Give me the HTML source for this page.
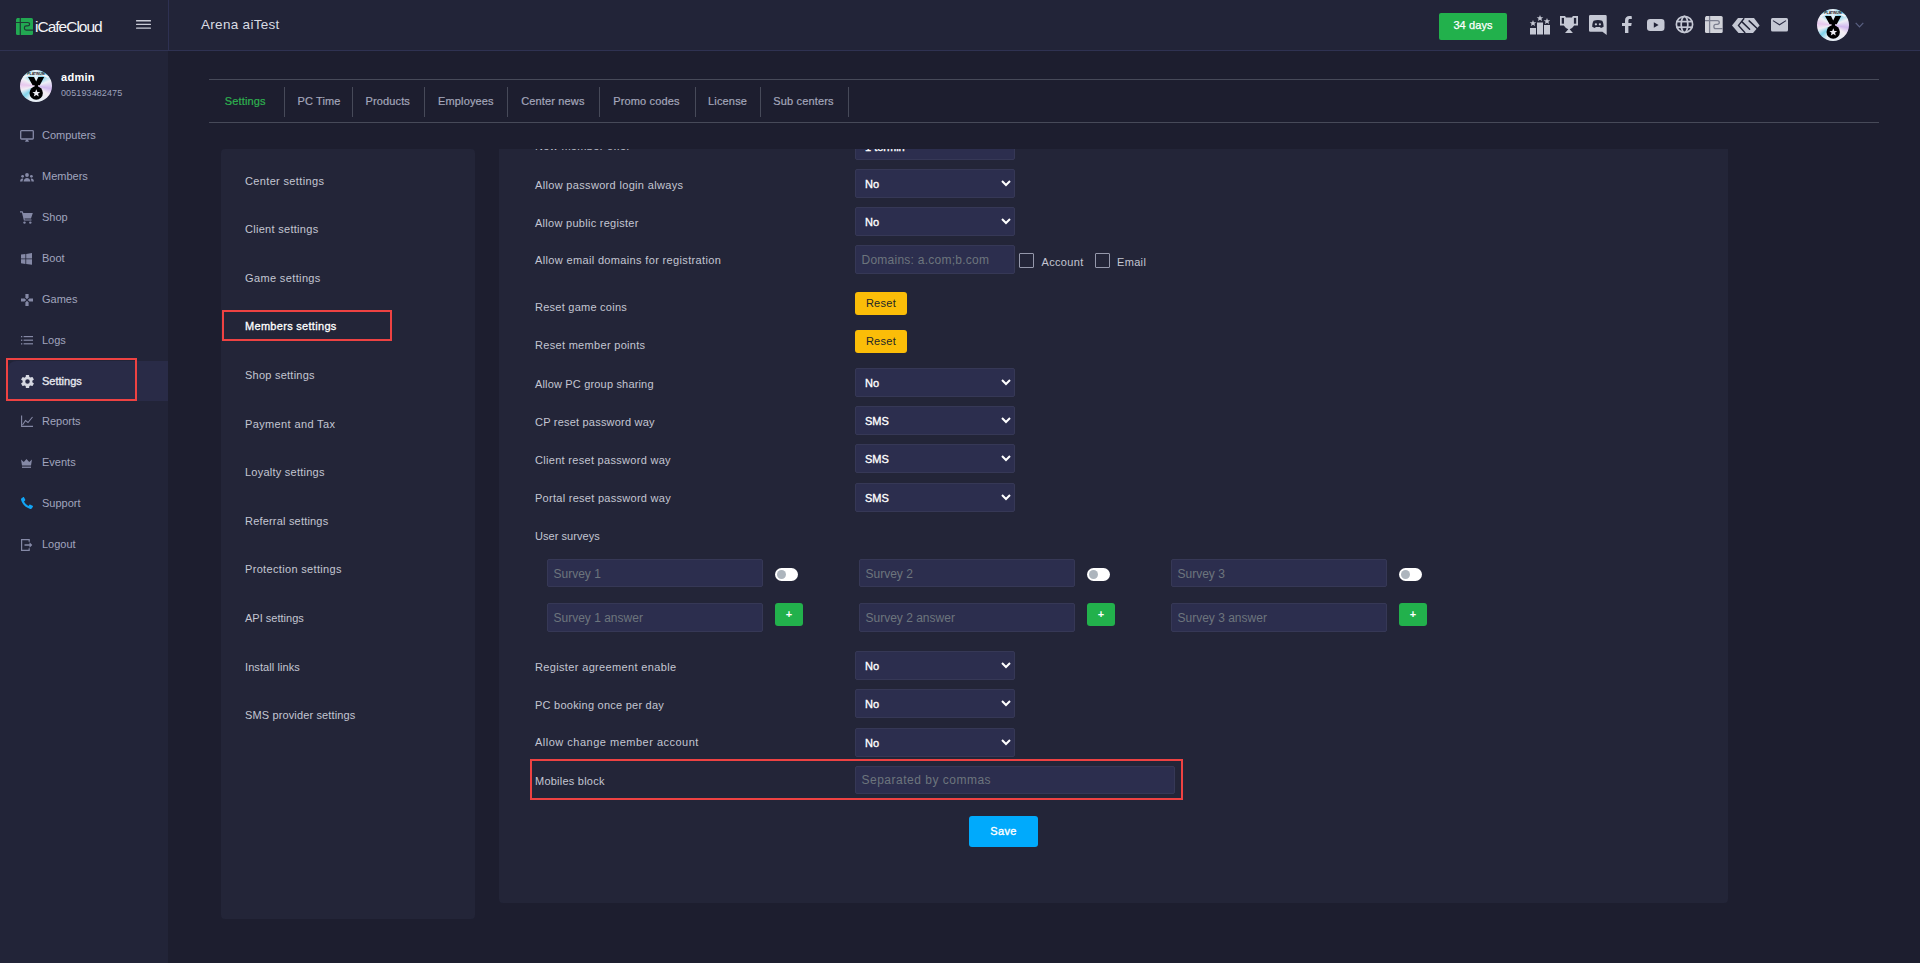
<!DOCTYPE html>
<html><head><meta charset="utf-8">
<style>
*{box-sizing:border-box;margin:0;padding:0}
html,body{width:1920px;height:963px;overflow:hidden;background:#1d1e2f;font-family:"Liberation Sans",sans-serif;color:#a9adc2}
.abs{position:absolute}
#hdr{position:absolute;left:0;top:0;width:1920px;height:51px;background:#222438;border-bottom:1px solid #2f3252}
#hdr .vline{position:absolute;left:168px;top:0;width:1px;height:50px;background:#2e3152}
#side{position:absolute;left:0;top:51px;width:168px;height:912px;background:#222438}
.mi{position:absolute;left:0;width:168px;height:41px;font-size:11px;color:#a3a8c0}
.mi .t{position:absolute;left:42px;top:0;line-height:41px;white-space:nowrap}
.mi svg{position:absolute;left:20px;top:14px}
.tabs{position:absolute;left:209px;top:79px;width:1670px;height:44px;border-top:1px solid #4a4c60;border-bottom:1px solid #4a4c60}
.tab{position:absolute;top:0;height:42px;line-height:42px;font-size:11px;color:#a6a9bd;white-space:nowrap}
.tsep{position:absolute;top:8px;width:1px;height:30px;background:#4a4c60}
.card{position:absolute;background:#232539;border-radius:5px}
.sm{position:absolute;left:24px;font-size:11px;color:#c5c7d3;white-space:nowrap}
.lbl{position:absolute;left:535px;font-size:11px;color:#c5c7d3;white-space:nowrap}
.red{position:absolute;border:2px solid #ee4242}
.av{width:32px;height:32px;border-radius:50%;overflow:hidden;position:absolute;background:conic-gradient(from 0deg,#eef2f8,#78d0ea 35deg,#eef0f6 70deg,#d0b8ee 100deg,#f5eef5 125deg,#e6ecf4 160deg,#e8f0f6 205deg,#7fd3ea 230deg,#f3eef5 255deg,#e8c8ee 275deg,#f0f2f6 300deg,#8fd8ee 325deg,#eef2f8)}
.mt{font-size:11px;color:#a1a5be;line-height:18px;white-space:nowrap}
.tt{font-size:11px;line-height:18px;letter-spacing:0.15px;white-space:nowrap;-webkit-text-stroke:0.2px currentColor}
.st{font-size:11px;line-height:18px;letter-spacing:0.35px;color:#c4c6d2;white-space:nowrap}
.lb{font-size:11px;line-height:18px;letter-spacing:0.33px;color:#c4c6d2;white-space:nowrap}
.sel{position:absolute;width:160px;height:29px;background:#2c2e4e;border-radius:2px;border:1px solid #363856;font-size:11px;color:#fff;font-weight:bold}
.sel .v{position:absolute;left:9px;top:1px;line-height:27px;letter-spacing:0px;font-weight:normal;-webkit-text-stroke:0.35px #fff;font-size:11px}
.inp{position:absolute;background:#2c2e4e;border-radius:2px;border:1px solid #363856;font-size:12px;color:#6c757d}
.inp .v{position:absolute;left:5.5px;top:1px;line-height:27px;white-space:nowrap;letter-spacing:0.25px;font-size:12px}
.cb{width:15px;height:15px;border:1px solid #9598ab;border-radius:1px}
.rst{width:52px;height:23px;background:#fbbd08;border-radius:3px;color:#212529;font-size:11px;text-align:center;line-height:23px;letter-spacing:0.3px}
.tog{width:23px;height:13px;border-radius:7px;background:#fff}
.tog .knob{position:absolute;left:2px;top:2px;width:9px;height:9px;border-radius:50%;background:#adb5bd}
.plus{width:28px;height:23.5px;background:#22b14c;border-radius:3px;color:#fff;font-size:11px;font-weight:bold;text-align:center;line-height:22px}
.save{width:69px;height:31px;background:#00aafc;border-radius:3px;color:#fff;font-size:11px;text-align:center;line-height:30px;letter-spacing:0.4px;-webkit-text-stroke:0.35px #fff}
</style></head>
<body>
<div id="hdr">
  <svg class="abs" style="left:16px;top:18px" width="17" height="17" viewBox="0 0 17 17">
    <path d="M1.2 0H15.5A1.5 1.5 0 0 1 17 1.5V15.5A1.5 1.5 0 0 1 15.5 17H1.5A1.5 1.5 0 0 1 0 15.5V1.2Z" fill="#22a852"/>
    <line x1="4.3" y1="0" x2="4.3" y2="17" stroke="#1f3a34" stroke-width="1.2"/>
    <path d="M0 4.5H11.6Q13.6 4.5 13.6 6.2Q13.6 7.9 11.6 7.9H10.2Q8.4 7.9 8.4 9.7V10.3Q8.4 12.1 10.2 12.1H17" fill="none" stroke="#1f3a34" stroke-width="1.2"/>
  </svg>
  <div class="abs" style="left:35px;top:16.5px;font-size:15.5px;letter-spacing:-1px;color:#f4f4f6;line-height:20px">iCafeCloud</div>
  <svg class="abs" style="left:136px;top:19.6px" width="15" height="9" viewBox="0 0 15 9">
    <rect x="0" y="0" width="15" height="1.4" rx="0.5" fill="#c9cbd6"/>
    <rect x="0" y="3.7" width="15" height="1.4" rx="0.5" fill="#c9cbd6"/>
    <rect x="0" y="7.4" width="15" height="1.4" rx="0.5" fill="#c9cbd6"/>
  </svg>
  <div class="vline"></div>
  <div class="abs" style="left:201px;top:15.5px;font-size:13.5px;letter-spacing:0.3px;color:#d9dbe3;line-height:18px">Arena aiTest</div>
  <div class="abs" style="left:1439px;top:13px;width:68px;height:27px;background:#22b14c;border-radius:2px;color:#fff;font-size:11px;text-align:center;line-height:25px;letter-spacing:0.1px;-webkit-text-stroke:0.25px #fff">34 days</div>
  <!-- rankings -->
  <svg class="abs" style="left:1529px;top:15px" width="21" height="20" viewBox="0 0 21 20" fill="#c5c8d4">
    <rect x="1" y="13" width="6" height="6.5"/>
    <rect x="8" y="7.5" width="6" height="12"/>
    <rect x="15" y="10" width="6" height="9.5"/>
    <polygon points="4,5 4.9,7.3 7.3,7.3 5.4,8.8 6.1,11.1 4,9.7 1.9,11.1 2.6,8.8 0.7,7.3 3.1,7.3"/>
    <polygon points="11,0 11.9,2.3 14.3,2.3 12.4,3.8 13.1,6.1 11,4.7 8.9,6.1 9.6,3.8 7.7,2.3 10.1,2.3"/>
    <polygon points="18,3 18.9,5.3 21.3,5.3 19.4,6.8 20.1,9.1 18,7.7 15.9,9.1 16.6,6.8 14.7,5.3 17.1,5.3"/>
  </svg>
  <!-- trophy -->
  <svg class="abs" style="left:1560px;top:16px" width="18" height="17" viewBox="0 0 18 17">
    <path d="M0 0H5L6 1.6H11.9L12.9 0H18V9.6H14.2Q12.6 12.3 9.7 13.2L12.9 17H5L8.3 13.2Q5.4 12.3 3.8 9.6H0Z" fill="#c5c8d4"/>
    <rect x="1.7" y="1.9" width="2.3" height="5.8" fill="#222438"/>
    <rect x="13.9" y="1.9" width="2.3" height="5.8" fill="#222438"/>
  </svg>
  <!-- discord -->
  <svg class="abs" style="left:1589px;top:15px" width="18" height="20" viewBox="0 0 18 20">
    <path d="M1.3 0H16.4A1.3 1.3 0 0 1 17.7 1.3V20L13.4 16.8H1.3A1.3 1.3 0 0 1 0 15.5V1.3A1.3 1.3 0 0 1 1.3 0Z" fill="#c5c8d4"/>
    <path d="M4.6 5.8C6 5.1 7.4 4.9 8.9 4.9S11.8 5.1 13.2 5.8C14.2 7.4 14.6 9.6 14.6 11.8C13.6 12.5 12.6 12.8 11.8 12.9L11.1 12H6.7L6 12.9C5.2 12.8 4.2 12.5 3.2 11.8C3.2 9.6 3.6 7.4 4.6 5.8Z" fill="#222438"/>
    <circle cx="6.9" cy="9.3" r="1.15" fill="#c5c8d4"/><circle cx="10.9" cy="9.3" r="1.15" fill="#c5c8d4"/>
  </svg>
  <!-- facebook -->
  <svg class="abs" style="left:1622px;top:16px" width="10" height="17" viewBox="0 0 10 17" fill="#c5c8d4">
    <path d="M3 17V10H0V7H3V4.5C3 1.5 4.8 0 7.3 0C8.5 0 9.5 0.1 9.8 0.2V3H8C6.7 3 6.4 3.6 6.4 4.6V7H9.7L9.2 10H6.4V17Z"/>
  </svg>
  <!-- youtube -->
  <svg class="abs" style="left:1647px;top:18.5px" width="17.5" height="12" viewBox="0 0 17.5 12">
    <rect x="0" y="0" width="17.5" height="12" rx="3.2" fill="#c5c8d4"/>
    <polygon points="6.8,3.3 11.6,6 6.8,8.7" fill="#222438"/>
  </svg>
  <!-- globe -->
  <svg class="abs" style="left:1675px;top:15px" width="19" height="19" viewBox="0 0 19 19" fill="none" stroke="#c5c8d4" stroke-width="1.7">
    <circle cx="9.5" cy="9.4" r="8.1"/>
    <ellipse cx="9.5" cy="9.4" rx="3.3" ry="8.1"/>
    <line x1="1.5" y1="6.6" x2="17.5" y2="6.6"/>
    <line x1="1.5" y1="12.2" x2="17.5" y2="12.2"/>
  </svg>
  <!-- i2 -->
  <svg class="abs" style="left:1705px;top:16px" width="18" height="17" viewBox="0 0 18 17">
    <path d="M1.2 0H16.2A1.5 1.5 0 0 1 17.7 1.5V15.5A1.5 1.5 0 0 1 16.2 17H1.5A1.5 1.5 0 0 1 0 15.5V1.2Z" fill="#d2d3da"/>
    <line x1="4.6" y1="0" x2="4.6" y2="17" stroke="#7b7e8f" stroke-width="1.3"/>
    <path d="M0 4.7H12.2Q14.3 4.7 14.3 6.5Q14.3 8.3 12.2 8.3H10.8Q8.9 8.3 8.9 10.2V10.8Q8.9 12.7 10.8 12.7H17.7" fill="none" stroke="#7b7e8f" stroke-width="1.3"/>
  </svg>
  <!-- ggleap chevrons -->
  <svg class="abs" style="left:1732px;top:18px" width="28" height="15" viewBox="0 0 28 15">
    <polygon points="6,0 22,0 27.6,7.4 21,15 6.5,15 0,7.4" fill="#c5c8d4"/>
    <polyline points="12.2,0.2 6.5,7.4 13.2,15" fill="none" stroke="#222438" stroke-width="1.4"/>
    <line x1="10" y1="3.9" x2="17.6" y2="11.3" stroke="#222438" stroke-width="1.5" stroke-linecap="round"/>
    <line x1="17.1" y1="2.9" x2="26" y2="11.2" stroke="#222438" stroke-width="1.5" stroke-linecap="round"/>
  </svg>
  <!-- mail -->
  <svg class="abs" style="left:1771px;top:17.7px" width="17" height="14" viewBox="0 0 17 14">
    <rect x="0" y="0" width="17" height="13.5" rx="1.5" fill="#c5c8d4"/>
    <polyline points="2,2.6 8.5,6.8 15,2.6" fill="none" stroke="#2a2c44" stroke-width="1.1"/>
  </svg>
  <!-- avatar -->
  <div class="abs av" style="left:1817px;top:9px"><svg width="32" height="32" viewBox="0 0 32 32" style="position:absolute;left:0;top:0"><path d="M3 6.5Q16 -1 29 6.5L28 8Q16 1.5 4 8Z" fill="#f4f4f6"/><text x="16" y="4.9" font-size="3.6" text-anchor="middle" font-family="Liberation Sans" font-weight="bold" fill="#1a1a1a" letter-spacing="-0.1">PLATINUM</text><polygon points="8,7 14,7 16.2,11.6 18.4,7 24.2,7 19.8,15.3 12.6,15.3" fill="#000"/><rect x="14.6" y="14.8" width="3.4" height="3" fill="#000"/><circle cx="16.2" cy="23" r="6.7" fill="#000"/><polygon points="16.3,19.2 17.4,21.9 20.2,22 18,23.8 18.8,26.6 16.3,25 13.8,26.6 14.6,23.8 12.4,22 15.2,21.9" fill="#ececf2"/></svg></div>
  <svg class="abs" style="left:1855px;top:22px" width="9" height="6" viewBox="0 0 9 6"><polyline points="0.7,0.8 4.5,4.8 8.3,0.8" fill="none" stroke="#5a6082" stroke-width="1.2"/></svg>
</div>
<div id="side"></div>
<div class="abs" style="left:8px;top:361px;width:160px;height:40px;background:#292b47;border-top-left-radius:8px"></div>
<div class="abs av" style="left:20px;top:70px"><svg width="32" height="32" viewBox="0 0 32 32" style="position:absolute;left:0;top:0"><path d="M3 6.5Q16 -1 29 6.5L28 8Q16 1.5 4 8Z" fill="#f4f4f6"/><text x="16" y="4.9" font-size="3.6" text-anchor="middle" font-family="Liberation Sans" font-weight="bold" fill="#1a1a1a" letter-spacing="-0.1">PLATINUM</text><polygon points="8,7 14,7 16.2,11.6 18.4,7 24.2,7 19.8,15.3 12.6,15.3" fill="#000"/><rect x="14.6" y="14.8" width="3.4" height="3" fill="#000"/><circle cx="16.2" cy="23" r="6.7" fill="#000"/><polygon points="16.3,19.2 17.4,21.9 20.2,22 18,23.8 18.8,26.6 16.3,25 13.8,26.6 14.6,23.8 12.4,22 15.2,21.9" fill="#ececf2"/></svg></div>
<div class="abs" style="left:61px;top:70px;font-size:11px;font-weight:bold;color:#fff;line-height:14px;letter-spacing:0.3px">admin</div>
<div class="abs" style="left:61px;top:87px;font-size:9px;color:#9da1bb;line-height:12px;letter-spacing:0.1px">005193482475</div>
<div class="abs mt" style="left:42px;top:126px">Computers</div>
<svg class="abs" style="left:20px;top:130px" width="14" height="12" viewBox="0 0 14 12"><rect x="0.7" y="0.7" width="12.6" height="8.3" rx="0.8" fill="none" stroke="#8589a6" stroke-width="1.3"/><polygon points="5,11.8 9,11.8 7.8,9.6 6.2,9.6" fill="#8589a6"/></svg>
<div class="abs mt" style="left:42px;top:167px">Members</div>
<svg class="abs" style="left:20px;top:173px" width="14" height="9" viewBox="0 0 14 9" fill="#8589a6"><circle cx="7" cy="2" r="1.9"/><circle cx="2.6" cy="3.3" r="1.4"/><circle cx="11.4" cy="3.3" r="1.4"/><path d="M3.6 8.6C3.8 6.2 5.2 4.9 7 4.9S10.2 6.2 10.4 8.6Z"/><path d="M0 8.6C0.2 6.9 1.1 5.6 2.3 5.6C2.7 5.6 3 5.7 3.3 5.9C2.8 6.6 2.6 7.6 2.5 8.6Z"/><path d="M14 8.6C13.8 6.9 12.9 5.6 11.7 5.6C11.3 5.6 11 5.7 10.7 5.9C11.2 6.6 11.4 7.6 11.5 8.6Z"/></svg>
<div class="abs mt" style="left:42px;top:208px">Shop</div>
<svg class="abs" style="left:20px;top:211px" width="13" height="13" viewBox="0 0 13 13" fill="#8589a6"><path d="M0 0.2H2.6L3.4 2H12.8L11 7.5H4.5L4.8 8.5H11.5V9.6H3.9L1.9 1.4H0Z"/><circle cx="4.5" cy="11.6" r="1.2"/><circle cx="10.3" cy="11.6" r="1.2"/></svg>
<div class="abs mt" style="left:42px;top:249px">Boot</div>
<svg class="abs" style="left:21px;top:253px" width="11" height="12" viewBox="0 0 11 12" fill="#8589a6"><path d="M0 1.6L4.4 1V5.5H0Z"/><path d="M5.2 0.9L11 0V5.5H5.2Z"/><path d="M0 6.3H4.4V10.9L0 10.3Z"/><path d="M5.2 6.3H11V11.8L5.2 11Z"/></svg>
<div class="abs mt" style="left:42px;top:290px">Games</div>
<svg class="abs" style="left:21px;top:294px" width="12" height="12" viewBox="0 0 12 12" fill="#8589a6"><path d="M4.4 0H7.6V3.6L6 5.2L4.4 3.6Z"/><path d="M4.4 12H7.6V8.4L6 6.8L4.4 8.4Z"/><path d="M0 4.4V7.6H3.6L5.2 6L3.6 4.4Z"/><path d="M12 4.4V7.6H8.4L6.8 6L8.4 4.4Z"/></svg>
<div class="abs mt" style="left:42px;top:331px">Logs</div>
<svg class="abs" style="left:21px;top:336px" width="12" height="9" viewBox="0 0 12 9" fill="#8589a6"><rect x="0" y="0" width="1.3" height="1.3"/><rect x="2.6" y="0" width="9.4" height="1.2"/><rect x="0" y="3.6" width="1.3" height="1.3"/><rect x="2.6" y="3.6" width="9.4" height="1.2"/><rect x="0" y="7.2" width="1.3" height="1.3"/><rect x="2.6" y="7.2" width="9.4" height="1.2"/></svg>
<div class="abs mt" style="left:42px;top:412px">Reports</div>
<svg class="abs" style="left:21px;top:415px" width="12" height="12" viewBox="0 0 12 12" fill="none" stroke="#8589a6" stroke-width="1.1"><polyline points="0.6,0.5 0.6,11.4 12,11.4"/><polyline points="1.5,10 4.5,5.5 7,7.5 11.5,2"/></svg>
<div class="abs mt" style="left:42px;top:453px">Events</div>
<svg class="abs" style="left:21px;top:459px" width="11" height="9" viewBox="0 0 11 9" fill="#8589a6"><path d="M0 0.5L2.8 3L5.5 0L8.2 3L11 0.5L10 6.5H1Z"/><rect x="1" y="7.6" width="9" height="1.3"/></svg>
<div class="abs mt" style="left:42px;top:494px">Support</div>
<svg class="abs" style="left:21px;top:497px" width="12" height="12" viewBox="0 0 12 12" fill="#12a4f4"><path d="M0.3 1.6L2 0.2C2.4 -0.1 2.9 0 3.1 0.4L4.2 2.6C4.4 3 4.3 3.4 4 3.7L3 4.5C3.8 6.2 5.6 8.1 7.4 8.9L8.3 7.9C8.6 7.6 9 7.5 9.4 7.7L11.6 8.8C12 9 12.1 9.5 11.8 9.9L10.4 11.7C10.1 12 9.7 12.1 9.3 12C4.9 10.9 1.1 7.1 0 2.6C-0.1 2.2 0 1.9 0.3 1.6Z"/></svg>
<div class="abs mt" style="left:42px;top:535px">Logout</div>
<svg class="abs" style="left:21px;top:539px" width="12" height="12" viewBox="0 0 12 12" fill="none" stroke="#8589a6" stroke-width="1.2"><polyline points="8.2,2.8 8.2,0.6 0.6,0.6 0.6,11.4 8.2,11.4 8.2,9.2"/><path d="M3.5 5.2H8.5V3.3L11.3 6L8.5 8.7V6.8H3.5Z" fill="#8589a6" stroke="none"/></svg>
<div class="abs mt" style="left:42px;top:372px;color:#e6e7ee;font-size:11px;letter-spacing:0px;-webkit-text-stroke:0.35px #e6e7ee">Settings</div>
<svg class="abs" style="left:20.5px;top:374.5px" width="13" height="13" viewBox="2 2 20 20" fill="#d6d8e2"><path d="M19.4 13c.04-.33.06-.66.06-1s-.02-.67-.06-1l2.1-1.65c.2-.15.25-.42.13-.64l-2-3.46c-.12-.22-.39-.3-.61-.22l-2.49 1c-.52-.4-1.08-.73-1.69-.98l-.38-2.65A.49.49 0 0 0 14 2h-4c-.25 0-.46.18-.49.42l-.38 2.65c-.61.25-1.17.59-1.69.98l-2.49-1a.5.5 0 0 0-.61.22l-2 3.46c-.13.22-.07.49.12.64L4.57 11c-.04.33-.07.67-.07 1s.03.67.07 1l-2.11 1.65c-.19.15-.24.42-.12.64l2 3.46c.12.22.39.3.61.22l2.49-1c.52.4 1.08.73 1.69.98l.38 2.65c.03.24.24.42.49.42h4c.25 0 .46-.18.49-.42l.38-2.65c.61-.25 1.17-.59 1.69-.98l2.49 1c.23.09.49 0 .61-.22l2-3.46c.12-.22.07-.49-.12-.64L19.4 13zM12 15.5A3.5 3.5 0 1 1 12 8.5a3.5 3.5 0 0 1 0 7z"/></svg>
<div class="red" style="left:6px;top:358px;width:131px;height:43px"></div>
<div class="abs" style="left:209px;top:79px;width:1670px;height:1px;background:#474a59"></div>
<div class="abs" style="left:209px;top:122px;width:1670px;height:1px;background:#474a59"></div>
<div class="abs tt" style="left:224.8px;top:91.5px;color:#2eb24f">Settings</div>
<div class="abs tt" style="left:297.4px;top:91.5px;color:#a4a7bb">PC Time</div>
<div class="abs tt" style="left:365.4px;top:91.5px;color:#a4a7bb">Products</div>
<div class="abs tt" style="left:438.0px;top:91.5px;color:#a4a7bb">Employees</div>
<div class="abs tt" style="left:521.2px;top:91.5px;color:#a4a7bb">Center news</div>
<div class="abs tt" style="left:613.2px;top:91.5px;color:#a4a7bb">Promo codes</div>
<div class="abs tt" style="left:708.1px;top:91.5px;color:#a4a7bb">License</div>
<div class="abs tt" style="left:773.3px;top:91.5px;color:#a4a7bb">Sub centers</div>
<div class="abs" style="left:284px;top:87px;width:1px;height:30px;background:#474a59"></div>
<div class="abs" style="left:352px;top:87px;width:1px;height:30px;background:#474a59"></div>
<div class="abs" style="left:424px;top:87px;width:1px;height:30px;background:#474a59"></div>
<div class="abs" style="left:507px;top:87px;width:1px;height:30px;background:#474a59"></div>
<div class="abs" style="left:599px;top:87px;width:1px;height:30px;background:#474a59"></div>
<div class="abs" style="left:695px;top:87px;width:1px;height:30px;background:#474a59"></div>
<div class="abs" style="left:760px;top:87px;width:1px;height:30px;background:#474a59"></div>
<div class="abs" style="left:848px;top:87px;width:1px;height:30px;background:#474a59"></div>
<div class="abs" style="left:221px;top:149px;width:254px;height:770px;background:#232538;border-radius:4px"></div>
<div class="abs" style="left:499px;top:149px;width:1229px;height:754px;background:#232538;border-radius:0 0 4px 4px"></div>
<div class="abs st" style="left:245px;top:171.6px;letter-spacing:0.35px">Center settings</div>
<div class="abs st" style="left:245px;top:220.2px;letter-spacing:0.29px">Client settings</div>
<div class="abs st" style="left:245px;top:268.8px;letter-spacing:0.37px">Game settings</div>
<div class="abs st" style="left:245px;top:317.4px;color:#fff;letter-spacing:0.3px;-webkit-text-stroke:0.3px #fff">Members settings</div>
<div class="abs st" style="left:245px;top:366.0px;letter-spacing:0.24px">Shop settings</div>
<div class="abs st" style="left:245px;top:414.6px;letter-spacing:0.37px">Payment and Tax</div>
<div class="abs st" style="left:245px;top:463.2px;letter-spacing:0.24px">Loyalty settings</div>
<div class="abs st" style="left:245px;top:511.8px;letter-spacing:0.19px">Referral settings</div>
<div class="abs st" style="left:245px;top:560.4px;letter-spacing:0.33px">Protection settings</div>
<div class="abs st" style="left:245px;top:609.0px;letter-spacing:0.01px">API settings</div>
<div class="abs st" style="left:245px;top:657.6px;letter-spacing:0.08px">Install links</div>
<div class="abs st" style="left:245px;top:706.2px;letter-spacing:0.13px">SMS provider settings</div>
<div class="red" style="left:222px;top:310px;width:170px;height:31px"></div>
<div class="abs" style="left:499px;top:149px;width:1229px;height:753px;overflow:hidden">
<div class="abs lb" style="left:36px;top:-12.0px;">New member offer</div>
<div class="abs sel" style="left:356px;top:-18.5px"><span class="v" style="top:2px">1 termin</span></div>
<div class="abs lb" style="left:36px;top:26.6px;letter-spacing:0.33px">Allow password login always</div>
<div class="abs sel" style="left:356px;top:20px"><span class="v">No</span><svg width="10" height="7" viewBox="0 0 10 7" style="position:absolute;left:144.5px;top:10px"><polyline points="1,1 5,5 9,1" fill="none" stroke="#fff" stroke-width="2"/></svg></div>
<div class="abs lb" style="left:36px;top:64.6px;letter-spacing:0.28px">Allow public register</div>
<div class="abs sel" style="left:356px;top:58px"><span class="v">No</span><svg width="10" height="7" viewBox="0 0 10 7" style="position:absolute;left:144.5px;top:10px"><polyline points="1,1 5,5 9,1" fill="none" stroke="#fff" stroke-width="2"/></svg></div>
<div class="abs lb" style="left:36px;top:102.0px;letter-spacing:0.35px">Allow email domains for registration</div>
<div class="abs inp" style="left:356px;top:96px;width:160px;height:29px"><span class="v">Domains: a.com;b.com</span></div>
<div class="abs cb" style="left:520px;top:104px"></div>
<div class="abs lb" style="left:542.5px;top:103.5px">Account</div>
<div class="abs cb" style="left:596px;top:104px"></div>
<div class="abs lb" style="left:618px;top:103.5px">Email</div>
<div class="abs lb" style="left:36px;top:149.0px;letter-spacing:0.25px">Reset game coins</div>
<div class="abs rst" style="left:356px;top:143px">Reset</div>
<div class="abs lb" style="left:36px;top:187.0px;letter-spacing:0.31px">Reset member points</div>
<div class="abs rst" style="left:356px;top:181px">Reset</div>
<div class="abs lb" style="left:36px;top:225.6px;letter-spacing:0.17px">Allow PC group sharing</div>
<div class="abs sel" style="left:356px;top:219px"><span class="v">No</span><svg width="10" height="7" viewBox="0 0 10 7" style="position:absolute;left:144.5px;top:10px"><polyline points="1,1 5,5 9,1" fill="none" stroke="#fff" stroke-width="2"/></svg></div>
<div class="abs lb" style="left:36px;top:263.6px;letter-spacing:0.21px">CP reset password way</div>
<div class="abs sel" style="left:356px;top:257px"><span class="v">SMS</span><svg width="10" height="7" viewBox="0 0 10 7" style="position:absolute;left:144.5px;top:10px"><polyline points="1,1 5,5 9,1" fill="none" stroke="#fff" stroke-width="2"/></svg></div>
<div class="abs lb" style="left:36px;top:301.6px;letter-spacing:0.30px">Client reset password way</div>
<div class="abs sel" style="left:356px;top:295px"><span class="v">SMS</span><svg width="10" height="7" viewBox="0 0 10 7" style="position:absolute;left:144.5px;top:10px"><polyline points="1,1 5,5 9,1" fill="none" stroke="#fff" stroke-width="2"/></svg></div>
<div class="abs lb" style="left:36px;top:340.1px;letter-spacing:0.28px">Portal reset password way</div>
<div class="abs sel" style="left:356px;top:333.5px"><span class="v">SMS</span><svg width="10" height="7" viewBox="0 0 10 7" style="position:absolute;left:144.5px;top:10px"><polyline points="1,1 5,5 9,1" fill="none" stroke="#fff" stroke-width="2"/></svg></div>
<div class="abs lb" style="left:36px;top:377.7px;letter-spacing:0.05px">User surveys</div>
<div class="abs inp" style="left:48px;top:409.5px;width:216px;height:28px"><span class="v" style="letter-spacing:0">Survey 1</span></div>
<div class="abs tog" style="left:276px;top:419px"><div class="knob"></div></div>
<div class="abs inp" style="left:48px;top:453.5px;width:216px;height:29px"><span class="v" style="letter-spacing:0">Survey 1 answer</span></div>
<div class="abs plus" style="left:276px;top:453.5px">+</div>
<div class="abs inp" style="left:360px;top:409.5px;width:216px;height:28px"><span class="v" style="letter-spacing:0">Survey 2</span></div>
<div class="abs tog" style="left:588px;top:419px"><div class="knob"></div></div>
<div class="abs inp" style="left:360px;top:453.5px;width:216px;height:29px"><span class="v" style="letter-spacing:0">Survey 2 answer</span></div>
<div class="abs plus" style="left:588px;top:453.5px">+</div>
<div class="abs inp" style="left:672px;top:409.5px;width:216px;height:28px"><span class="v" style="letter-spacing:0">Survey 3</span></div>
<div class="abs tog" style="left:900px;top:419px"><div class="knob"></div></div>
<div class="abs inp" style="left:672px;top:453.5px;width:216px;height:29px"><span class="v" style="letter-spacing:0">Survey 3 answer</span></div>
<div class="abs plus" style="left:900px;top:453.5px">+</div>
<div class="abs lb" style="left:36px;top:508.6px;letter-spacing:0.35px">Register agreement enable</div>
<div class="abs sel" style="left:356px;top:502px"><span class="v">No</span><svg width="10" height="7" viewBox="0 0 10 7" style="position:absolute;left:144.5px;top:10px"><polyline points="1,1 5,5 9,1" fill="none" stroke="#fff" stroke-width="2"/></svg></div>
<div class="abs lb" style="left:36px;top:546.6px;letter-spacing:0.24px">PC booking once per day</div>
<div class="abs sel" style="left:356px;top:540px"><span class="v">No</span><svg width="10" height="7" viewBox="0 0 10 7" style="position:absolute;left:144.5px;top:10px"><polyline points="1,1 5,5 9,1" fill="none" stroke="#fff" stroke-width="2"/></svg></div>
<div class="abs lb" style="left:36px;top:584px;letter-spacing:0.50px">Allow change member account</div>
<div class="abs sel" style="left:356px;top:579px"><span class="v">No</span><svg width="10" height="7" viewBox="0 0 10 7" style="position:absolute;left:144.5px;top:10px"><polyline points="1,1 5,5 9,1" fill="none" stroke="#fff" stroke-width="2"/></svg></div>
<div class="abs lb" style="left:36px;top:623.0px;letter-spacing:0.23px">Mobiles block</div>
<div class="abs inp" style="left:356px;top:617px;width:320px;height:28px"><span class="v" style="line-height:25px;letter-spacing:0.5px">Separated by commas</span></div>
<div class="red" style="left:31px;top:610px;width:653px;height:41px"></div>
<div class="abs save" style="left:470px;top:667px">Save</div>
</div>
</body></html>
